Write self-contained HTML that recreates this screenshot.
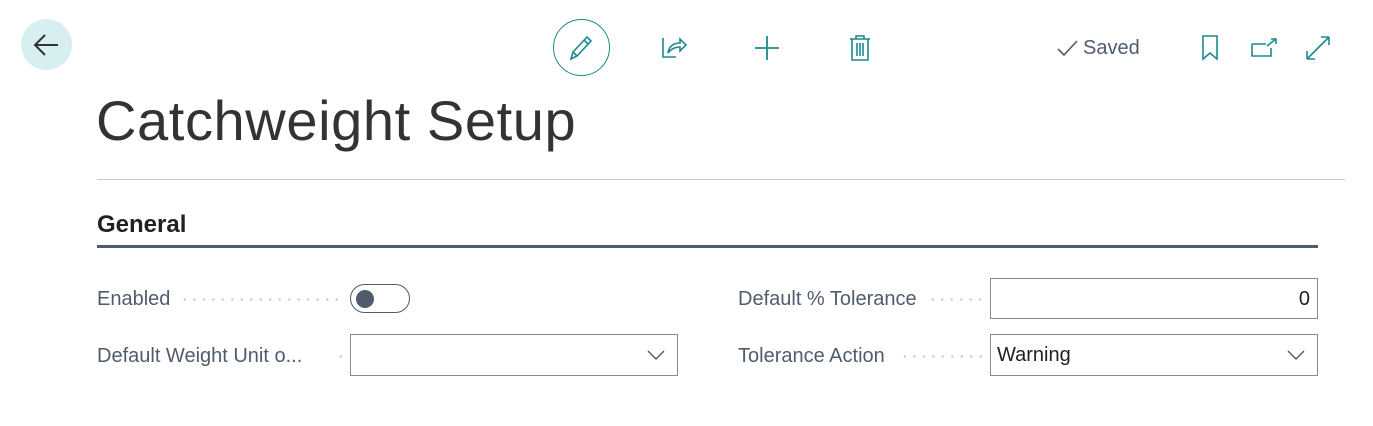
<!DOCTYPE html>
<html><head><meta charset="utf-8"><style>
*{box-sizing:border-box;margin:0;padding:0}
body{width:1373px;height:426px;background:#fff;font-family:"Liberation Sans",sans-serif;position:relative;overflow:hidden;color:#212121}
.abs{position:absolute}
.lbl{font-size:20px;color:#505C6D}
.dots{height:3px;background-image:radial-gradient(circle,#c4c4c4 1px,transparent 1.3px);background-size:9.5px 3px;background-repeat:repeat-x}
.box{border:1px solid #8a8a8a;background:#fff}
</style></head><body>
<div class="abs" style="left:21px;top:19px;width:51px;height:51px;border-radius:50%;background:#d8eff2"></div>
<svg class="abs" style="left:21px;top:19px" width="51" height="51"><path d="M37 26H14M24 16L14 26L24 36" stroke="#333" stroke-width="2" fill="none"/></svg>
<div class="abs" style="left:553px;top:19px;width:57px;height:57px;border-radius:50%;border:1px solid #1a8a8f"></div>
<svg class="abs" style="left:553px;top:19px" width="57" height="57"><path d="M18 40L20 33L34 18L38 22L24 37ZM20 33L24 37M31 21L35 25" stroke="#1a8a8f" stroke-width="1.6" fill="none"/></svg>
<svg class="abs" style="left:660px;top:34px" width="30" height="30"><path d="M3 4V23H16M8 19C9 12 14 9 20 9V5L26 11L20 17V13C15 13 11 15 8 19Z" stroke="#1a8a8f" stroke-width="1.6" fill="none"/></svg>
<svg class="abs" style="left:752px;top:33px" width="30" height="30"><path d="M15 3V27M3 15H27" stroke="#1a8a8f" stroke-width="1.8"/></svg>
<svg class="abs" style="left:845px;top:33px" width="30" height="30"><path d="M5 6H25M11 6V3H19V6M7 6V27H23V6M12 10V23M15 10V23M18 10V23" stroke="#1a8a8f" stroke-width="1.6" fill="none"/></svg>
<svg class="abs" style="left:1056px;top:39px" width="26" height="20"><path d="M2 10L8 16L21 2" stroke="#505C6D" stroke-width="1.6" fill="none"/></svg>
<div class="abs" style="left:1083px;top:37px;font-size:20px;color:#505C6D">Saved</div>
<svg class="abs" style="left:1200px;top:35px" width="20" height="26"><path d="M3 1H17V24L10 18L3 24Z" stroke="#1a8a8f" stroke-width="1.6" fill="none"/></svg>
<svg class="abs" style="left:1250px;top:36px" width="30" height="24"><path d="M2 8H16M2 8V20H21V12M17 10L26 3M21 3H26V8" stroke="#1a8a8f" stroke-width="1.6" fill="none"/></svg>
<svg class="abs" style="left:1305px;top:35px" width="26" height="26"><path d="M2 24L24 2M2 24V16M2 24H10M24 2H16M24 2V10" stroke="#1a8a8f" stroke-width="1.6" fill="none"/></svg>
<div class="abs" style="left:96px;top:88px;font-size:56px;font-weight:normal;color:#333;letter-spacing:0.6px">Catchweight Setup</div>
<div class="abs" style="left:97px;top:179px;width:1248px;height:1px;background:#c8c8c8"></div>
<div class="abs" style="left:97px;top:211px;font-size:24px;font-weight:bold;color:#212121">General</div>
<div class="abs" style="left:97px;top:245px;width:1221px;height:3px;background:#505C6D"></div>
<div class="abs lbl" style="left:97px;top:288px">Enabled</div>
<div class="abs dots" style="left:180px;top:298px;width:162px"></div>
<div class="abs" style="left:350px;top:284px;width:60px;height:29px;border:1px solid #505C6D;border-radius:15px"></div>
<div class="abs" style="left:356px;top:290px;width:18px;height:18px;border-radius:50%;background:#505C6D"></div>
<div class="abs lbl" style="left:97px;top:345px">Default Weight Unit o...</div>
<div class="abs dots" style="left:336px;top:355px;width:8px"></div>
<div class="abs box" style="left:350px;top:334px;width:328px;height:42px"></div>
<svg class="abs" style="left:646px;top:349px" width="20" height="12"><path d="M2 2L10 10L18 2" stroke="#505C6D" stroke-width="1.4" fill="none"/></svg>
<div class="abs lbl" style="left:738px;top:288px">Default % Tolerance</div>
<div class="abs dots" style="left:928px;top:298px;width:56px"></div>
<div class="abs box" style="left:990px;top:278px;width:328px;height:41px"></div>
<div class="abs" style="left:1280px;top:288px;font-size:20px;color:#212121;width:30px;text-align:right">0</div>
<div class="abs lbl" style="left:738px;top:345px">Tolerance Action</div>
<div class="abs dots" style="left:900px;top:355px;width:84px"></div>
<div class="abs box" style="left:990px;top:334px;width:328px;height:42px"></div>
<div class="abs" style="left:997px;top:344px;font-size:20px;color:#212121">Warning</div>
<svg class="abs" style="left:1286px;top:349px" width="20" height="12"><path d="M2 2L10 10L18 2" stroke="#505C6D" stroke-width="1.4" fill="none"/></svg>
</body></html>
